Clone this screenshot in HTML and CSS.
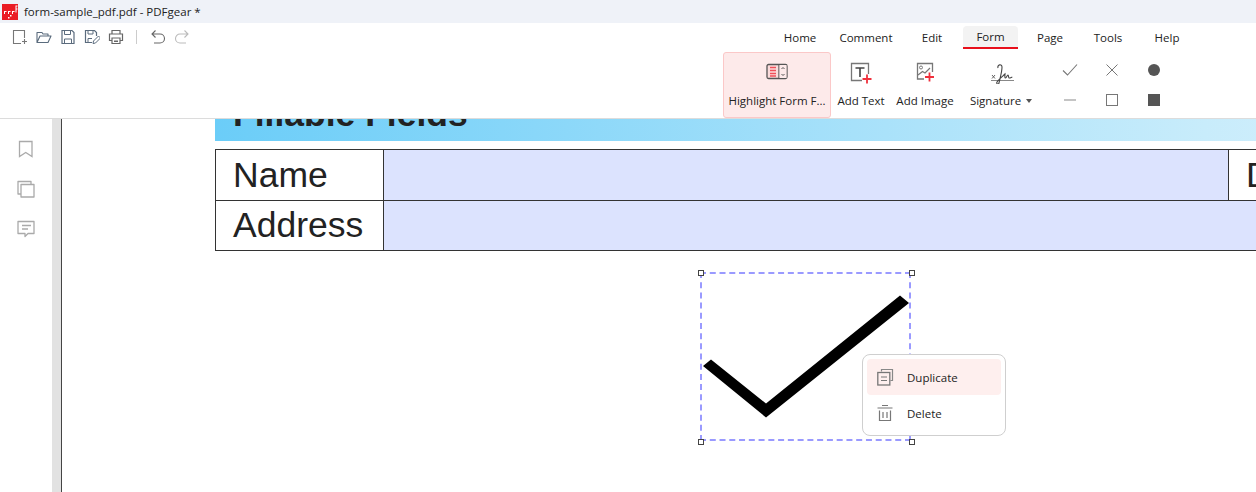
FILE: index.html
```html
<!DOCTYPE html>
<html lang="en">
<head>
<meta charset="utf-8">
<title>form-sample_pdf.pdf - PDFgear *</title>
<link rel="stylesheet" href="styles.css">
</head>
<body>
<div class="app">
  <header class="titlebar">
    <svg class="logo" width="16" height="16" viewBox="0 0 16 16"><rect width="16" height="16" fill="#ea1c24"/><path d="M2 7h1v3H2zM3 7h1.500v1H3zM6 7h1v3H6zM7 7h1.500v1H7zM10 7h1v3h-1zM11 7h1.500v1H11zM13.500 1.500h2v1h-1v2h1v1h-1v3h-1zM8 11h1.500v1.500H8zM6 13h1.500v1.500H6z" fill="#fff"/></svg>
    <span class="title">form-sample_pdf.pdf - PDFgear *</span>
  </header>

  <section class="ribbon">
    <div class="quick">
      <svg class="qi" viewBox="0 0 16 16"><path d="M9 14.500H1.500v-13h11V9M10 12.500h5M12.500 10v5" fill="none" stroke="#777" stroke-width="1.100"/></svg>
      <svg class="qi" viewBox="0 0 16 16"><path d="M1 13.500V3.500h5l1 1.500h5v2M1 13.500h11l3-6.500H4z" fill="none" stroke="#5a6b7d" stroke-width="1.100" stroke-linejoin="round"/></svg>
      <svg class="qi" viewBox="0 0 16 16"><path d="M2 1.500h10l2 2v11H2z" fill="none" stroke="#5a6b7d" stroke-width="1.200"/><path d="M4.500 2v3.500h6V2M4.500 14.500V10h7v4.500" fill="none" stroke="#5a6b7d"/></svg>
      <svg class="qi" viewBox="0 0 16 16"><path d="M8 13.500H1.500v-12h9l2 2V7" fill="none" stroke="#5a6b7d" stroke-width="1.200"/><path d="M4 2v3h5V2M4 13V9.500h4" fill="none" stroke="#5a6b7d"/><path d="M9 14.500l.5-2.500 5-5 2 2-5 5z" fill="none" stroke="#5a6b7d"/></svg>
      <svg class="qi" viewBox="0 0 16 16"><path d="M4 5V1.500h8V5M4 11.500H1.500V5h13v6.500H12M4 9h8v5.500H4z" fill="none" stroke="#666" stroke-width="1.200"/><path d="M6 11.500h4v1.500H6z" fill="#666"/></svg>
      <span class="qsep"></span>
      <svg class="qi" viewBox="0 0 16 16"><path d="M5.500 1.500L2 5l3.500 3.500M2 5h8a4.500 4.500 0 0 1 0 9H4" fill="none" stroke="#666" stroke-width="1.100"/></svg>
      <svg class="qi" viewBox="0 0 16 16"><path d="M10.500 1.500L14 5l-3.500 3.500M14 5H6a4.500 4.500 0 0 0 0 9h6" fill="none" stroke="#bbb" stroke-width="1.100"/></svg>
    </div>

    <div class="ribbon-right">
      <nav class="tabs">
        <span class="tab">Home</span>
        <span class="tab">Comment</span>
        <span class="tab">Edit</span>
        <span class="tab tab-active">Form</span>
        <span class="tab">Page</span>
        <span class="tab">Tools</span>
        <span class="tab">Help</span>
      </nav>
      <div class="tools">
        <button class="tool tool-highlight">
          <svg class="ti" width="24" height="24" viewBox="0 0 24 24"><rect x="2" y="4.500" width="20" height="14" rx="1.500" fill="#fbdcdc" stroke="#555" stroke-width="1.300"/><path d="M14 4.500v14" stroke="#555" stroke-width="1.300"/><rect x="14.500" y="5" width="7" height="13" fill="#fdeaea"/><path d="M5 7.500h6M5 10.500h6M5 13.500h6M5 16h6" stroke="#f0505a" stroke-width="1.500"/><path d="M16.500 9l1.500-1.500L19.500 9M16.500 14l1.500 1.500 1.500-1.500" fill="none" stroke="#555"/></svg>
          <span>Highlight Form F...</span>
        </button>
        <button class="tool tool-text">
          <svg class="ti" width="24" height="24" viewBox="0 0 24 24"><path d="M13 20.500H2.500v-17h17V14" fill="none" stroke="#777" stroke-width="1.300"/><path d="M6.500 8h9M11 8v9" stroke="#444" stroke-width="1.600"/><path d="M13.500 19h9M18 14.500v9" stroke="#f0303c" stroke-width="1.800"/></svg>
          <span>Add Text</span>
        </button>
        <button class="tool tool-image">
          <svg class="ti" width="24" height="24" viewBox="0 0 24 24"><path d="M11 19H4.500V3.500h15V12" fill="none" stroke="#777" stroke-width="1.300"/><circle cx="8" cy="7.500" r="1.500" fill="none" stroke="#777"/><path d="M5 15l4.500-3.500 2.500 1.500 5-5" fill="none" stroke="#777" stroke-width="1.200"/><path d="M12 17h9M16.500 12.500v9" stroke="#f0303c" stroke-width="1.800"/></svg>
          <span>Add Image</span>
        </button>
        <button class="tool tool-sign">
          <svg class="ti" width="24" height="24" viewBox="0 0 24 24"><path d="M0 20.500h23" stroke="#888"/><path d="M1 15l3 3.500M4 15l-3 3.500" stroke="#555" stroke-width=".9"/><path d="M7 8c-1-3.500 4-4.500 4-1 0 5-2 11-3 16-.5 2-3 1-2-1 2-3 6-6 8-8 0 2-.5 4 .5 4 1 0 1.500-3 2.500-3 .7 0 .3 3 1.300 3 1 0 2-.7 3-1" fill="none" stroke="#444" stroke-width="1.100"/></svg>
          <span class="sign-label">Signature<i class="caret"></i></span>
        </button>
        <div class="shapes">
          <span class="shape"><svg width="16" height="16" viewBox="0 0 16 16"><path d="M1 8.500L5.500 13 15 2.500" fill="none" stroke="#777" stroke-width="1.100"/></svg></span>
          <span class="shape"><svg width="14" height="14" viewBox="0 0 14 14"><path d="M1.500 1.500l11 11M12.500 1.500l-11 11" stroke="#777" stroke-width="1"/></svg></span>
          <span class="shape"><i class="dot"></i></span>
          <span class="shape"><i class="dash"></i></span>
          <span class="shape"><i class="square"></i></span>
          <span class="shape"><i class="block"></i></span>
        </div>
      </div>
    </div>
  </section>

  <main class="workspace">
    <aside class="sidebar">
      <svg width="20" height="20" viewBox="0 0 20 20"><path d="M3.500 2.500H16v15l-6.250-4-6.250 4z" fill="none" stroke="#aaa" stroke-width="1.300"/></svg>
      <svg width="20" height="20" viewBox="0 0 20 20"><path d="M5 18V5.500h13V18zM5 15H2V2.500h13v3" fill="none" stroke="#aaa" stroke-width="1.300" stroke-linejoin="round"/></svg>
      <svg width="20" height="20" viewBox="0 0 20 20"><path d="M2 2.500h16v12h-6l-3 3v-3H2z" fill="none" stroke="#aaa" stroke-width="1.300" stroke-linejoin="round"/><path d="M6 6.500h9M6 10h6" stroke="#aaa" stroke-width="1.300"/></svg>
    </aside>
    <div class="gutter"></div>
    <div class="page">
      <div class="band"><h1 class="heading">Fillable Fields</h1></div>
      <table class="form-table">
        <tr>
          <th class="c-label">Name</th>
          <td class="c-field"></td>
          <th class="c-date">Date</th>
        </tr>
        <tr>
          <th class="c-label">Address</th>
          <td class="c-field" colspan="2"></td>
        </tr>
      </table>

      <div class="selection">
        <svg class="check" width="210" height="169" viewBox="0 0 210 169"><polygon points="2,94 10,87.500 65,131.500 199,23.500 208,31 65,145.500" fill="#000"/></svg>
        <i class="handle h-tl"></i><i class="handle h-tr"></i><i class="handle h-bl"></i><i class="handle h-br"></i>
      </div>

      <div class="menu">
        <div class="menu-item menu-item-on">
          <svg width="18" height="18" viewBox="0 0 18 18"><path d="M5.500 3.500v-2h11v11h-2" fill="none" stroke="#888" stroke-width="1.200"/><rect x="1.800" y="4.500" width="12" height="12.500" fill="none" stroke="#777" stroke-width="1.300"/><path d="M5 9h6M5 12.500h6" stroke="#777" stroke-width="1.200"/></svg>
          <span>Duplicate</span>
        </div>
        <div class="menu-item">
          <svg width="18" height="18" viewBox="0 0 18 18"><path d="M1.500 4h15M6 1.500h6" stroke="#777" stroke-width="1.200"/><path d="M3.500 6.500v10h11v-10M7 8v6M11 8v6" fill="none" stroke="#777" stroke-width="1.200"/></svg>
          <span>Delete</span>
        </div>
      </div>
    </div>
  </main>
</div>
</body>
</html>
```

FILE: styles.css
```css
* { box-sizing: border-box; }
html, body { margin: 0; padding: 0; background: #fff; }
body { font-family: "Open Sans", "Liberation Sans", sans-serif; color: #222; }

.app { width: 1256px; height: 492px; display: flex; flex-direction: column; overflow: hidden; }

.titlebar { height: 23px; flex: none; display: flex; align-items: center; padding-left: 2px; background: #eff2f8; gap: 6px; }
.logo { display: block; }
.title { font-size: 11.500px; line-height: 16px; color: #222; }

.ribbon { height: 96px; flex: none; display: flex; justify-content: space-between; border-bottom: 1px solid #dcdcdc; background: #fff; }
.quick { display: flex; align-items: flex-start; padding: 6px 0 0 12px; gap: 8px; }
.qi { width: 16px; height: 16px; display: block; }
.qsep { width: 1px; height: 14px; margin: 1px 5px 0 4px; background: #ccc; }

.ribbon-right { width: 533px; display: flex; flex-direction: column; }
.tabs { height: 29px; flex: none; display: grid; grid-template-columns: 49px 56px 76px 56px 3px 55px 64px 52px 66px; padding-top: 3px; }
.tab { grid-row: 1; height: 23px; display: flex; align-items: center; justify-content: center; font-size: 11.500px; color: #222; border-radius: 4px 4px 0 0; }
.tab:nth-child(1) { grid-column: 2; }
.tab:nth-child(2) { grid-column: 3; }
.tab:nth-child(3) { grid-column: 4; }
.tab:nth-child(4) { grid-column: 6; }
.tab:nth-child(5) { grid-column: 7; }
.tab:nth-child(6) { grid-column: 8; }
.tab:nth-child(7) { grid-column: 9; }
.tab-active { background: #f3f3f3; border-bottom: 2px solid #e8101c; }

.tools { flex: 1; display: flex; align-items: stretch; }
.tool { display: flex; flex-direction: column; align-items: center; margin: 0; padding: 8px 0 0; border: 0; border-radius: 3px; background: none; font: inherit; font-size: 11.500px; color: #222; white-space: nowrap; }
.tool span { display: block; margin-top: 8px; line-height: 17px; }
.ti { display: block; }
.tool-highlight { width: 108px; background: #fdeaea; border: 1px solid #fbc8c8; padding-top: 7px; }
.tool-text { width: 52px; margin-left: 4px; }
.tool-image { width: 64px; margin-left: 6px; }
.tool-sign { width: 75px; margin-left: 8px; }
.sign-label { padding-right: 3px; }
.caret { display: inline-block; margin-left: 5px; vertical-align: 2px; border-left: 3.500px solid transparent; border-right: 3.500px solid transparent; border-top: 4px solid #555; }

.shapes { margin: 3px 0 0 9px; display: grid; grid-template-columns: repeat(3, 42px); grid-template-rows: repeat(2, 30px); }
.shape { display: flex; align-items: center; justify-content: center; }
.shape svg { display: block; }
.dot { width: 12px; height: 12px; border-radius: 50%; background: #555; }
.dash { width: 12px; height: 2px; background: #c4c4c4; }
.square { width: 12px; height: 12px; border: 1px solid #777; }
.block { width: 12px; height: 12px; background: #555; }

.workspace { flex: 1; min-height: 0; display: flex; }
.sidebar { width: 52px; flex: none; display: flex; flex-direction: column; align-items: center; padding-top: 20px; gap: 20px; padding-right: 1px; }
.sidebar svg { display: block; }
.gutter { width: 10px; flex: none; background: #e2e2e2; border-right: 1px solid #444; }
.page { flex: 1; min-width: 0; position: relative; overflow: hidden; padding-left: 153px; background: #fff; }

.band { width: 1100px; height: 22px; overflow: hidden; background: linear-gradient(90deg, #6bcdf8 0%, #c8ecfb 90%, #d0eefc 100%); }
.heading { margin: -25px 0 0 18px; font: bold 35.500px/41px "Liberation Sans", Arial, sans-serif; color: #222; }

.form-table { width: 1100px; margin-top: 8px; border-collapse: collapse; table-layout: fixed; font-family: "Liberation Sans", Arial, sans-serif; }
.form-table tr { height: 50.500px; }
.form-table th, .form-table td { border: 1px solid #333; padding: 1px 0 0 17px; font-size: 35.500px; font-weight: normal; text-align: left; color: #222; white-space: nowrap; overflow: hidden; }
.c-label { width: 168px; }
.c-field { background: #dce3fe; width: 845px; }

.selection { position: absolute; left: 638px; top: 153px; width: 211px; height: 169px; border: 2px dashed #9a9aff; }
.check { position: absolute; left: -1px; top: -2px; display: block; }
.handle { position: absolute; width: 6px; height: 6px; background: #fff; border: 1px solid #444; }
.h-tl { left: -4px; top: -4px; }
.h-tr { right: -6px; top: -4px; }
.h-bl { left: -4px; bottom: -6px; }
.h-br { right: -6px; bottom: -6px; }

.menu { position: absolute; left: 800px; top: 235px; width: 144px; height: 82px; padding: 4px; background: #fff; border: 1px solid #cfcfcf; border-radius: 8px; }
.menu-item { height: 36px; display: flex; align-items: center; padding-left: 9px; gap: 13px; border-radius: 4px; font-size: 11.500px; color: #222; }
.menu-item svg { display: block; }
.menu-item-on { background: #feefee; }
```
